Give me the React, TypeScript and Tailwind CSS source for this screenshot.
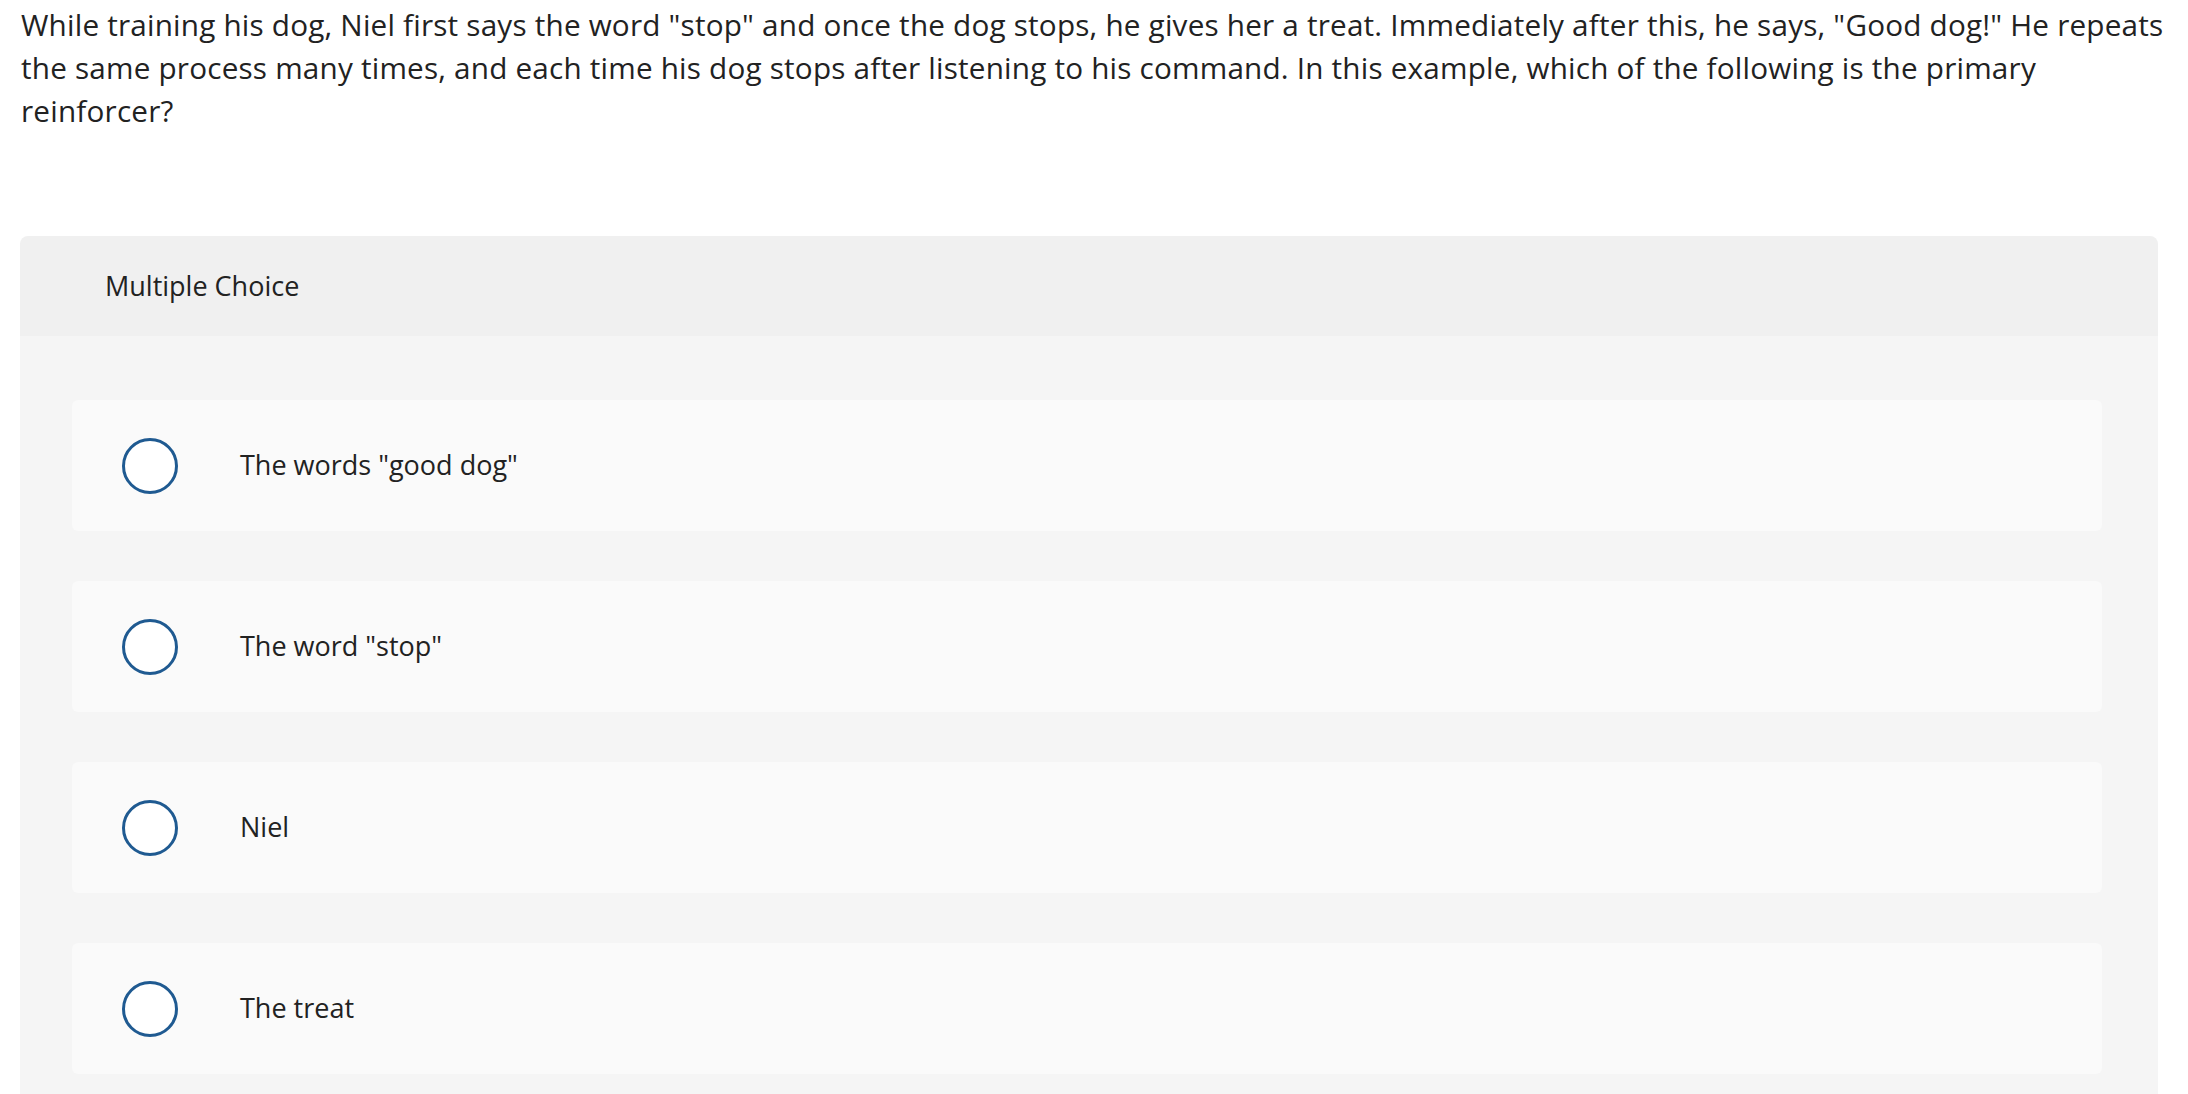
const OPTIONS = ['The words "good dog"', 'The word "stop"', "Niel", "The treat"];

function Radio() {
  return (
    <span className="block w-[56px] h-[56px] shrink-0 rounded-full border-[3px] border-[#1f5a91] bg-white" />
  );
}

export default function App() {
  return (
    <div
      className="h-screen bg-white text-[#222222] overflow-hidden"
      style={{ fontFamily: "'Open Sans', Lato, sans-serif" }}
    >
      <p className="pl-[21px] pr-[17px] pt-[3px] text-[29.7px] leading-[43px] tracking-[0.2px]">
        While training his dog, Niel first says the word "stop" and once the dog stops, he gives her a treat. Immediately
        after this, he says, "Good dog!" He repeats the same process many times, and each time his dog stops after
        listening to his command. In this example, which of the following is the primary reinforcer?
      </p>

      <div className="ml-[20px] mr-[30px] mt-[104px] rounded-t-[8px] overflow-hidden">
        <div className="h-[100px] bg-[#f0f0f0] flex items-center pl-[85px] text-[27px]">Multiple Choice</div>
        <div className="bg-[#f5f5f5] pt-[64px] pb-[80px] pl-[52px] pr-[56px] flex flex-col gap-[50px]">
          {OPTIONS.map((label) => (
            <label
              key={label}
              className="h-[131px] rounded-[6px] bg-[#fafafa] flex items-center pl-[50px] gap-[62px] text-[27px] cursor-pointer"
            >
              <Radio />
              <span>{label}</span>
            </label>
          ))}
        </div>
      </div>
    </div>
  );
}
